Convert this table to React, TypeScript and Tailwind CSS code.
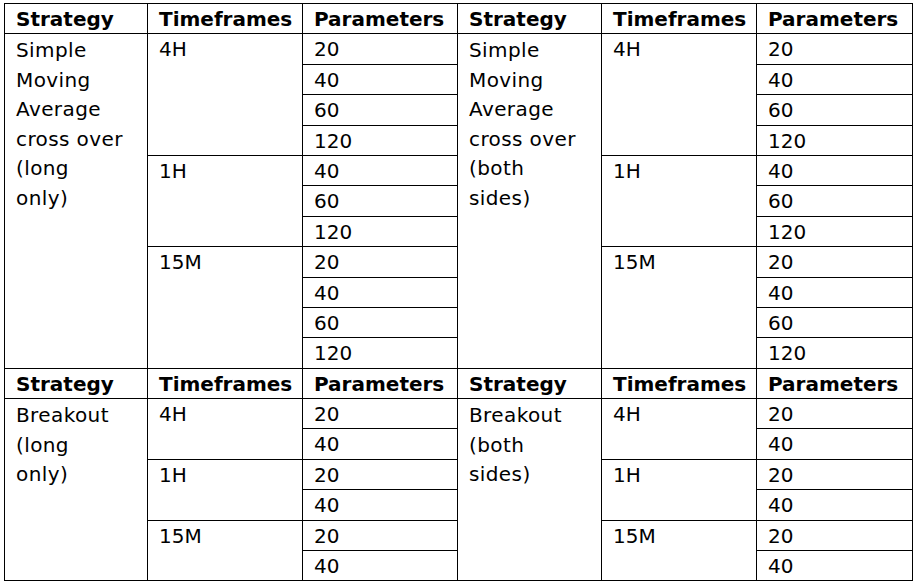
const headers = ["Strategy", "Timeframes", "Parameters"];

type Group = { tf: string; params: string[] };

const smaGroups: Group[] = [
  { tf: "4H", params: ["20", "40", "60", "120"] },
  { tf: "1H", params: ["40", "60", "120"] },
  { tf: "15M", params: ["20", "40", "60", "120"] },
];

const breakoutGroups: Group[] = [
  { tf: "4H", params: ["20", "40"] },
  { tf: "1H", params: ["20", "40"] },
  { tf: "15M", params: ["20", "40"] },
];

const cell = "border border-black align-top p-0 pl-[11px] pt-[2px] leading-[26px]";

const StrategyText = ({ lines }: { lines: string[] }) => (
  <>
    {lines.map((l) => (
      <div key={l} className="whitespace-nowrap leading-[29.5px]">{l}</div>
    ))}
  </>
);

const HeaderRow = () => (
  <tr className="h-[30.4px]">
    {[...headers, ...headers].map((h, i) => (
      <th key={i} className={`${cell} text-left font-bold`}>{h}</th>
    ))}
  </tr>
);

const Section = ({ groups, left, right }: { groups: Group[]; left: string[]; right: string[] }) => {
  const total = groups.reduce((n, g) => n + g.params.length, 0);
  const rows: React.ReactElement[] = [];
  groups.forEach((g, gi) => {
    g.params.forEach((p, pi) => {
      const first = gi === 0 && pi === 0;
      rows.push(
        <tr key={`${gi}-${pi}`} className="h-[30.4px]">
          {first && (
            <td rowSpan={total} className={`${cell} tracking-[0.4px]`}>
              <StrategyText lines={left} />
            </td>
          )}
          {pi === 0 && <td rowSpan={g.params.length} className={cell}>{g.tf}</td>}
          <td className={cell}>{p}</td>
          {first && (
            <td rowSpan={total} className={`${cell} tracking-[0.4px]`}>
              <StrategyText lines={right} />
            </td>
          )}
          {pi === 0 && <td rowSpan={g.params.length} className={cell}>{g.tf}</td>}
          <td className={cell}>{p}</td>
        </tr>
      );
    });
  });
  return (
    <>
      <HeaderRow />
      {rows}
    </>
  );
};

export default function App() {
  return (
    <div className="w-[914px] h-[584px] bg-white pt-[3px] pl-[4px] text-black" style={{ fontFamily: '"DejaVu Sans", sans-serif' }}>
      <table className="border-collapse table-fixed w-[908px] text-[20px]">
        <colgroup>
          <col className="w-[143px]" />
          <col className="w-[155px]" />
          <col className="w-[155px]" />
          <col className="w-[144px]" />
          <col className="w-[155px]" />
          <col className="w-[156px]" />
        </colgroup>
        <tbody>
          <Section
            groups={smaGroups}
            left={["Simple", "Moving", "Average", "cross over", "(long", "only)"]}
            right={["Simple", "Moving", "Average", "cross over", "(both", "sides)"]}
          />
          <Section
            groups={breakoutGroups}
            left={["Breakout", "(long", "only)"]}
            right={["Breakout", "(both", "sides)"]}
          />
        </tbody>
      </table>
    </div>
  );
}
